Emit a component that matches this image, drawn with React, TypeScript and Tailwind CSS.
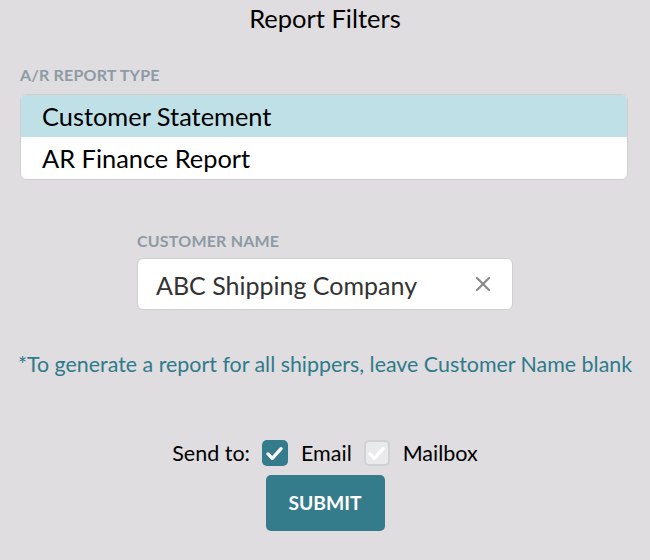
import { X } from "lucide-react";

const reportTypes = ["Customer Statement", "AR Finance Report"];

function CheckBox({ checked }: { checked: boolean }) {
  return (
    <span
      className={`flex h-[26px] w-[26px] items-center justify-center rounded-[5px] ${
        checked ? "bg-[#347b8c]" : "border-2 border-[#cfd1d4] bg-[#e9eaeb]"
      }`}
    >
      <svg viewBox="0 0 24 24" className="h-[21px] w-[21px]" fill="none">
        <path
          d="M4.5 12.5l5 5 10-11"
          stroke="white"
          strokeWidth="3.8"
          strokeLinecap="round"
          strokeLinejoin="round"
        />
      </svg>
    </span>
  );
}

export default function App() {
  return (
    <div
      className="flex h-[560px] w-[650px] flex-col bg-[#dfdddf] text-black"
      style={{ fontFamily: "Lato, 'Open Sans', sans-serif" }}
    >
      {/* Title */}
      <h1 className="pt-[4px] text-center text-[25.5px] leading-[28px]">Report Filters</h1>

      {/* Report type */}
      <div className="mt-[35px] px-[20px]">
        <div className="text-[16px] font-bold leading-[16px] tracking-[0.2px] text-[#8c9ba4]">
          A/R REPORT TYPE
        </div>
        <div className="mt-[11px] mr-[2px] overflow-hidden rounded-[6px] border border-[#cfcfcf] bg-white">
          {reportTypes.map((t, i) => (
            <div
              key={t}
              className={`h-[42px] px-[21px] text-[25.4px] leading-[42px] ${
                i === 0 ? "bg-[#bfe0e6]" : ""
              }`}
            >
              {t}
            </div>
          ))}
        </div>
      </div>

      {/* Customer name */}
      <div className="mx-auto mt-[53px] w-[376px]">
        <div className="text-[16px] font-bold leading-[16px] tracking-[0.2px] text-[#8c9ba4]">
          CUSTOMER NAME
        </div>
        <div className="mt-[9px] flex h-[52px] items-center justify-between rounded-[6px] border border-[#cfcfcf] bg-white pl-[18px] pr-[17px]">
          <span className="pt-[3px] text-[25px] text-[#333]">ABC Shipping Company</span>
          <X className="h-[24px] w-[24px] text-[#8a8a8a]" strokeWidth={2.2} />
        </div>
      </div>

      {/* Note */}
      <p className="mt-[41px] text-center text-[21.4px] leading-[26px] text-[#2f7a8b]">
        *To generate a report for all shippers, leave Customer Name blank
      </p>

      {/* Send to */}
      <div className="mt-[63px] flex items-center justify-center gap-[12px] text-[21.5px] leading-[26px]">
        <span>Send to:</span>
        <CheckBox checked />
        <span className="ml-[1px]">Email</span>
        <CheckBox checked={false} />
        <span className="ml-[1px]">Mailbox</span>
      </div>

      <div className="mt-[9px] flex justify-center">
        <button className="h-[56px] w-[119px] rounded-[5px] bg-[#347b8c] text-[19.3px] font-bold text-white">
          SUBMIT
        </button>
      </div>
    </div>
  );
}
